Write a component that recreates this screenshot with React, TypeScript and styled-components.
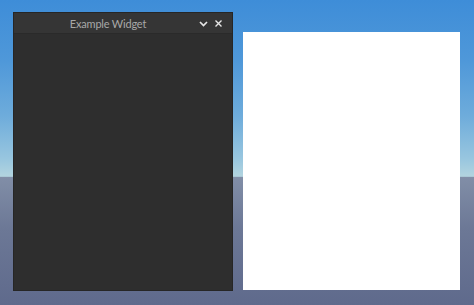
import styled, { createGlobalStyle } from 'styled-components';

const GlobalStyle = createGlobalStyle`
  html, body {
    margin: 0;
    padding: 0;
    width: 474px;
    height: 305px;
    overflow: hidden;
  }
  body {
    font-family: Lato, "Open Sans", sans-serif;
  }
`;

const Scene = styled.div`
  width: 474px;
  height: 305px;
  box-sizing: border-box;
  padding: 13px 0 0 14px;
  display: flex;
  align-items: flex-start;
  gap: 11px;
  background: linear-gradient(
    to bottom,
    #3e8dd8 0%,
    #4f98d9 20%,
    #6eacdb 38%,
    #98c6df 52%,
    #b2d4df 57.8%,
    #818ea7 58.2%,
    #6c7896 75%,
    #5f6a8c 100%
  );
`;

const Widget = styled.div`
  width: 218px;
  height: 277px;
  display: flex;
  flex-direction: column;
  background: #2e2e2e;
  box-shadow: 0 0 0 1px #262626;
`;

const TitleBar = styled.div`
  height: 20px;
  flex-shrink: 0;
  display: flex;
  align-items: center;
  position: relative;
  background: #353535;
  border-bottom: 1px solid #2a2a2a;
`;

const Title = styled.div`
  flex: 1;
  text-align: center;
  color: #a8a8a8;
  font-size: 11px;
  letter-spacing: -0.2px;
  padding-right: 30px;
`;

const Controls = styled.div`
  position: absolute;
  right: 9px;
  top: 0;
  height: 20px;
  display: flex;
  align-items: center;
  gap: 6px;
`;

const Icon = styled.svg`
  width: 9px;
  height: 9px;
  display: block;
`;

const Content = styled.div`
  flex: 1;
`;

const Paper = styled.div`
  margin-top: 19px;
  width: 217px;
  height: 258px;
  background: #ffffff;
`;

export default function App() {
  return (
    <>
      <GlobalStyle />
      <Scene>
        <Widget>
          <TitleBar>
            <Title>Example Widget</Title>
            <Controls>
              <Icon viewBox="0 0 9 9">
                <path d="M1 3 L4.5 6.5 L8 3" stroke="#e6e6e6" strokeWidth="1.7" fill="none" />
              </Icon>
              <Icon viewBox="0 0 9 9">
                <path d="M1.5 1.5 L7.5 7.5 M7.5 1.5 L1.5 7.5" stroke="#e6e6e6" strokeWidth="1.4" fill="none" />
              </Icon>
            </Controls>
          </TitleBar>
          <Content />
        </Widget>
        <Paper />
      </Scene>
    </>
  );
}
